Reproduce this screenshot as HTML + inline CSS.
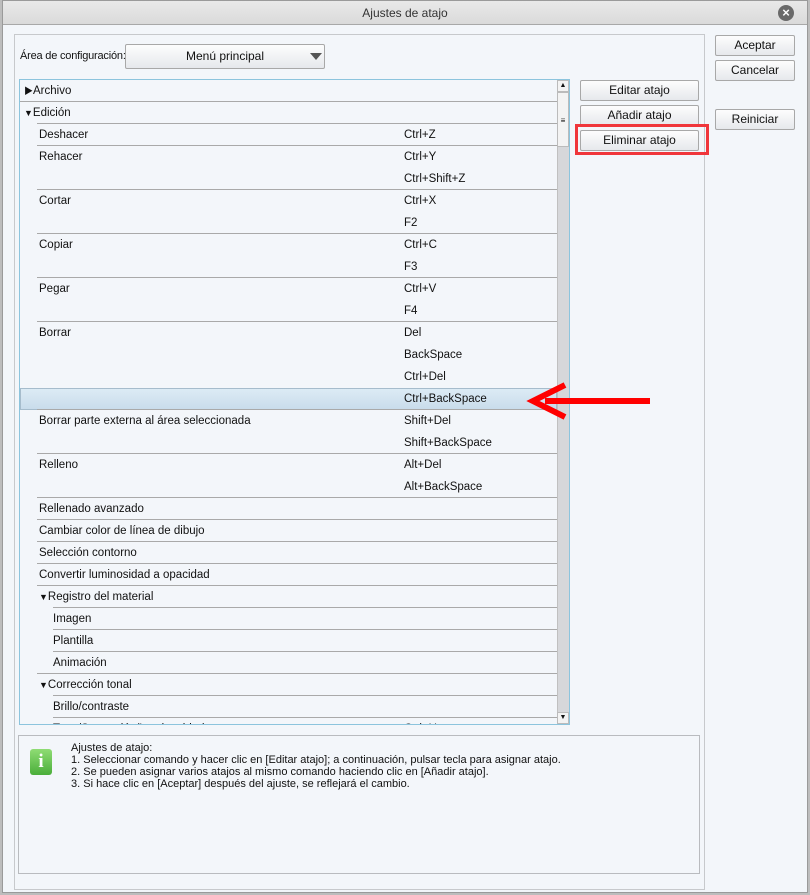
<!DOCTYPE html>
<html><head><meta charset="utf-8"><style>
*{margin:0;padding:0;box-sizing:border-box}
body{width:810px;height:895px;background:#bdbdbd;font-family:"Liberation Sans","Noto Sans CJK JP",sans-serif;font-size:12px;color:#111;position:relative;overflow:hidden}
.abs{position:absolute}
#win{left:2px;top:0;width:806px;height:893px;background:#f3f6fa;border:1px solid #9a9a9a}
#title{left:0;top:0;width:804px;height:24px;background:linear-gradient(#e9e9e9,#dadada);border-bottom:1px solid #a8a8a8;text-align:center;line-height:24px;font-size:12px;color:#333}
.btn{position:absolute;height:21px;border:1px solid #a8a8a8;border-radius:2px;background:linear-gradient(#fdfdfd,#e6e8ec);text-align:center;line-height:19px;font-size:12px}
.row{position:absolute;height:22px;line-height:22px;white-space:nowrap;font-size:11.5px}
.ln{position:absolute;height:1px;background:#a9a9a9}
.k{position:absolute;left:384px}
</style></head><body>
<div id="win" class="abs">
<div id="title" class="abs">Ajustes de atajo</div>
<div class="abs" style="left:775px;top:4px;width:16px;height:16px;border-radius:50%;background:#6a6a6a;color:#fff;font-size:13px;line-height:16px;text-align:center;font-weight:bold">×</div>
</div>
<div class="abs" style="left:14px;top:34px;width:691px;height:856px;border:1px solid #c7c9cc;background:#f3f6fa"></div>
<div class="abs" style="left:20px;top:50px;font-size:11px;letter-spacing:-0.2px">Área de configuración:</div>
<div class="btn" style="left:125px;top:44px;width:200px;height:25px;line-height:23px">Menú principal</div>
<div class="abs" style="left:310px;top:53px;width:0;height:0;border-left:6px solid transparent;border-right:6px solid transparent;border-top:7px solid #555"></div>

<div class="abs" style="left:19px;top:79px;width:551px;height:646px;border:1px solid #8cc4dd;background:#f3f6fa;overflow:hidden">
<div style="position:absolute;left:0;top:0;width:537px;height:644px">
<div class="row" style="left:4px;top:0"><span style="font-size:9px">▶</span>Archivo</div>
<div class="ln" style="left:0;top:21px;width:537px"></div>
<div class="row" style="left:4px;top:22px"><span style="font-size:9px">▼</span>Edición</div>
<div class="ln" style="left:17px;top:43px;width:520px"></div>
<div class="abs" style="left:0;top:308px;width:537px;height:22px;background:linear-gradient(#dcebf5,#c9dceb);border:1px solid #a6bccc"></div>
</div>
<div id="rows"></div>
<div class="abs" style="left:537px;top:0;width:12px;height:644px;background:#d6d7da;border-left:1px solid #c0c0c0"></div>
<div class="abs" style="left:537px;top:0;width:12px;height:12px;background:#f3f3f3;border:1px solid #bbb;font-size:7px;text-align:center;line-height:10px">▲</div>
<div class="abs" style="left:537px;top:12px;width:12px;height:55px;background:#f3f3f3;border:1px solid #bbb;font-size:8px;text-align:center;line-height:55px">≡</div>
<div class="abs" style="left:537px;top:632px;width:12px;height:12px;background:#f3f3f3;border:1px solid #bbb;font-size:7px;text-align:center;line-height:10px">▼</div>
</div>

<div class="btn" style="left:580px;top:80px;width:119px">Editar atajo</div>
<div class="btn" style="left:580px;top:105px;width:119px">Añadir atajo</div>
<div class="btn" style="left:580px;top:130px;width:119px">Eliminar atajo</div>
<div class="abs" style="left:575px;top:124px;width:134px;height:31px;border:3px solid #f0363b"></div>
<div class="btn" style="left:715px;top:35px;width:80px">Aceptar</div>
<div class="btn" style="left:715px;top:60px;width:80px">Cancelar</div>
<div class="btn" style="left:715px;top:109px;width:80px">Reiniciar</div>

<div class="abs" style="left:18px;top:735px;width:682px;height:139px;border:1px solid #b9bbbf;background:#f3f6fa"></div>
<div class="abs" style="left:30px;top:749px;width:22px;height:26px;border-radius:3px;background:linear-gradient(#8fdc74,#4aae3a);color:#fff;font-family:'Liberation Serif',serif;font-weight:bold;font-size:19px;text-align:center;line-height:26px">i</div>
<div class="abs" style="left:71px;top:742px;font-size:11px;line-height:12px">Ajustes de atajo:<br>1. Seleccionar comando y hacer clic en [Editar atajo]; a continuación, pulsar tecla para asignar atajo.<br>2. Se pueden asignar varios atajos al mismo comando haciendo clic en [Añadir atajo].<br>3. Si hace clic en [Aceptar] después del ajuste, se reflejará el cambio.</div>

<svg class="abs" style="left:525px;top:380px" width="130" height="42"><path d="M125 21 H20" stroke="#f00" stroke-width="6"/><path d="M40 5 L8 21 L40 37" stroke="#f00" stroke-width="6" fill="none"/></svg>

<script>
var R=[["Deshacer","Ctrl+Z",1],["Rehacer","Ctrl+Y",1],["","Ctrl+Shift+Z",0],["Cortar","Ctrl+X",1],["","F2",0],["Copiar","Ctrl+C",1],["","F3",0],["Pegar","Ctrl+V",1],["","F4",0],["Borrar","Del",1],["","BackSpace",0],["","Ctrl+Del",0],["","Ctrl+BackSpace",0],["Borrar parte externa al área seleccionada","Shift+Del",1],["","Shift+BackSpace",0],["Relleno","Alt+Del",1],["","Alt+BackSpace",0],["Rellenado avanzado","",1],["Cambiar color de línea de dibujo","",1],["Selección contorno","",1],["Convertir luminosidad a opacidad","",1],["▼Registro del material","",1,1],["Imagen","",1,2],["Plantilla","",1,2],["Animación","",1,2],["▼Corrección tonal","",1,1],["Brillo/contraste","",1,2],["Tono/Saturación/Luminosidad","Ctrl+U",1,2]];
var h="";R.forEach(function(r,i){var t=44+i*22;var lv=r[3]||0;var x=lv==2?33:19;var lx=lv==2?33:17;
if(i>0&&r[2])h+='<div class="ln" style="left:'+lx+'px;top:'+(t-1)+'px;width:'+(537-lx)+'px"></div>';
var txt=r[0].replace("▼",'<span style="font-size:9px">▼</span>');
h+='<div class="row" style="left:'+x+'px;top:'+t+'px;width:'+(537-x)+'px">'+txt+'<span class="k" style="left:'+(384-x)+'px">'+r[1]+'</span></div>';});
document.getElementById("rows").innerHTML=h;
</script>
</body></html>
